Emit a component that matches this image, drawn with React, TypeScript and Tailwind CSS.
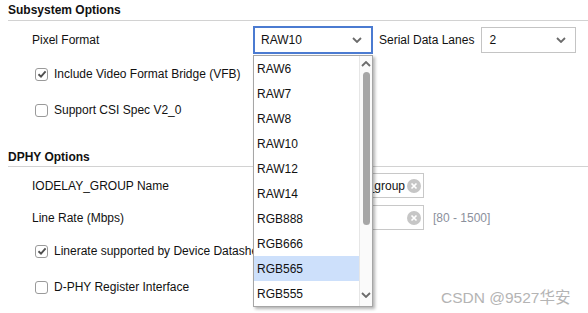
import React from 'react';

const formats = ['RAW6', 'RAW7', 'RAW8', 'RAW10', 'RAW12', 'RAW14', 'RGB888', 'RGB666', 'RGB565', 'RGB555'];

function Chevron({ dir = 'down', className = '' }: { dir?: 'up' | 'down'; className?: string }) {
  return (
    <svg width="10" height="6" viewBox="0 0 10 6" className={className}>
      <path
        d={dir === 'down' ? 'M1 1 L5 5 L9 1' : 'M1 5 L5 1 L9 5'}
        fill="none"
        stroke="#6b6b6b"
        strokeWidth="1.8"
      />
    </svg>
  );
}

function Check({ checked, label }: { checked?: boolean; label: string }) {
  return (
    <div className="flex items-center h-[24px] pl-[27px] gap-[6px] whitespace-nowrap">
      <span className="w-[13px] h-[13px] border border-[#9a9a9a] rounded-[3px] bg-white flex items-center justify-center shrink-0">
        {checked && (
          <svg width="10" height="10" viewBox="0 0 10 10">
            <path d="M1.5 5.2 L4 7.6 L8.6 2.4" fill="none" stroke="#505050" strokeWidth="1.9" />
          </svg>
        )}
      </span>
      <span>{label}</span>
    </div>
  );
}

function ClearIcon() {
  return (
    <span className="w-[14px] h-[14px] rounded-full bg-[#c6c6c6] flex items-center justify-center shrink-0">
      <svg width="8" height="8" viewBox="0 0 8 8">
        <path d="M1.5 1.5 L6.5 6.5 M6.5 1.5 L1.5 6.5" stroke="#fff" strokeWidth="1.7" />
      </svg>
    </span>
  );
}

function Header({ title }: { title: string }) {
  return (
    <div className="flex items-center font-bold border-b border-[#d2d2d2] h-full">{title}</div>
  );
}

export default function App() {
  return (
    <div className="relative w-[588px] h-[313px] overflow-hidden bg-white text-[12px] text-[#111] font-['Liberation_Sans',Arial,sans-serif]">
      <div className="flex flex-col pl-[8px]">
        {/* Subsystem Options */}
        <div className="h-[21px]">
          <Header title="Subsystem Options" />
        </div>
        <div className="flex items-center h-[28px] mt-[5px]">
          <span className="w-[245px] pl-[24px]">Pixel Format</span>
          <div className="w-[120px] h-[28px] border-2 border-[#4b7bd1] flex items-center justify-between pl-[6px] pr-[9px]">
            <span>RAW10</span>
            <Chevron />
          </div>
          <span className="ml-[6px]">Serial Data Lanes</span>
          <div className="ml-[7px] w-[95px] h-[26px] border border-[#c4c4c4] flex items-center justify-between pl-[7px] pr-[9px]">
            <span>2</span>
            <Chevron />
          </div>
        </div>
        <div className="mt-[8px]">
          <Check checked label="Include Video Format Bridge (VFB)" />
        </div>
        <div className="mt-[12px]">
          <Check label="Support CSI Spec V2_0" />
        </div>

        {/* DPHY Options */}
        <div className="h-[19px] mt-[26px]">
          <Header title="DPHY Options" />
        </div>
        <div className="flex items-center h-[25px] mt-[6px]">
          <span className="w-[245px] pl-[24px]">IODELAY_GROUP Name</span>
          <div className="w-[171px] h-[25px] border border-[#c8c8c8] flex items-center pr-[2px] overflow-hidden">
            <span className="flex-1 min-w-0 overflow-hidden flex justify-end whitespace-nowrap pr-[2px]">
              mipi_csi2_rx_subsyst_0_idelay_group
            </span>
            <ClearIcon />
          </div>
        </div>
        <div className="flex items-center h-[25px] mt-[7px]">
          <span className="w-[245px] pl-[24px]">Line Rate (Mbps)</span>
          <div className="w-[171px] h-[25px] border border-[#c8c8c8] flex items-center justify-between pl-[4px] pr-[2px]">
            <span>1000</span>
            <ClearIcon />
          </div>
          <span className="ml-[9px] text-[#8b909c]">[80 - 1500]</span>
        </div>
        <div className="mt-[9px]">
          <Check checked label="Linerate supported by Device Datasheet" />
        </div>
        <div className="mt-[12px]">
          <Check label="D-PHY Register Interface" />
        </div>
      </div>

      {/* open dropdown list */}
      <div className="absolute left-[253px] top-[55px] w-[120px] h-[252px] bg-white border border-[#a6a6a6] shadow-[2px_2px_3px_rgba(0,0,0,0.3)] flex">
        <div className="flex-1 flex flex-col">
          {formats.map((f) => (
            <div
              key={f}
              className={`h-[25px] flex items-center pl-[3px] ${f === 'RGB565' ? 'bg-[#cde0fb]' : ''}`}
            >
              {f}
            </div>
          ))}
        </div>
        <div className="w-[13px] border-l border-[#e6e6e6] bg-[#fafafa] flex flex-col items-center">
          <div className="h-[16px] flex items-center">
            <Chevron dir="up" />
          </div>
          <div className="w-[7px] h-[153px] rounded-full bg-[#a6a6a6]" />
          <div className="flex-1" />
          <div className="h-[14px] flex items-start">
            <Chevron />
          </div>
        </div>
      </div>

      <div className="absolute left-[441px] top-[286px] text-[15.5px] text-[#b4b4b4] font-['Liberation_Sans','Noto_Sans_CJK_SC',sans-serif] whitespace-nowrap">
        CSDN @9527华安
      </div>
    </div>
  );
}
